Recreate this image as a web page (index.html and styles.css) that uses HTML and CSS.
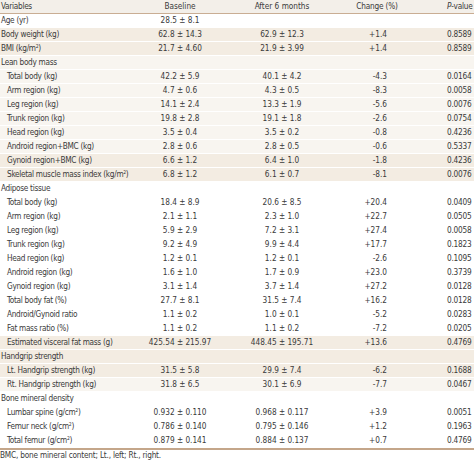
FILE: index.html
```html
<!DOCTYPE html>
<html>
<head>
<meta charset="utf-8">
<link rel="stylesheet" href="styles.css">
</head>
<body>
<div class="table">
  <div class="row head">
    <div class="lab top">Variables</div>
    <div class="v1">Baseline</div>
    <div class="v2">After 6 months</div>
    <div class="chh">Change (%)</div>
    <div class="p"><i>P</i>-value</div>
  </div>
  <div class="row"><div class="lab top">Age (yr)</div><div class="v1">28.5 ± 8.1</div><div class="v2"></div><div class="ch"></div><div class="p"></div></div>
  <div class="row sh"><div class="lab">Body weight (kg)</div><div class="v1">62.8 ± 14.3</div><div class="v2">62.9 ± 12.3</div><div class="ch">+1.4</div><div class="p">0.8589</div></div>
  <div class="row sh"><div class="lab top">BMI (kg/m<sup>2</sup>)</div><div class="v1">21.7 ± 4.60</div><div class="v2">21.9 ± 3.99</div><div class="ch">+1.4</div><div class="p">0.8589</div></div>

  <div class="row lt"><div class="lab top">Lean body mass</div><div class="v1"></div><div class="v2"></div><div class="ch"></div><div class="p"></div></div>
  <div class="row lt"><div class="lab sub">Total body (kg)</div><div class="v1">42.2 ± 5.9</div><div class="v2">40.1 ± 4.2</div><div class="ch">-4.3</div><div class="p">0.0164</div></div>
  <div class="row lt"><div class="lab sub">Arm region (kg)</div><div class="v1">4.7 ± 0.6</div><div class="v2">4.3 ± 0.5</div><div class="ch">-8.3</div><div class="p">0.0058</div></div>
  <div class="row lt"><div class="lab sub">Leg region (kg)</div><div class="v1">14.1 ± 2.4</div><div class="v2">13.3 ± 1.9</div><div class="ch">-5.6</div><div class="p">0.0076</div></div>
  <div class="row lt"><div class="lab sub">Trunk region (kg)</div><div class="v1">19.8 ± 2.8</div><div class="v2">19.1 ± 1.8</div><div class="ch">-2.6</div><div class="p">0.0754</div></div>
  <div class="row lt"><div class="lab sub">Head region (kg)</div><div class="v1">3.5 ± 0.4</div><div class="v2">3.5 ± 0.2</div><div class="ch">-0.8</div><div class="p">0.4236</div></div>
  <div class="row lt"><div class="lab sub">Android region+BMC (kg)</div><div class="v1">2.8 ± 0.6</div><div class="v2">2.8 ± 0.5</div><div class="ch">-0.6</div><div class="p">0.5337</div></div>
  <div class="row sh"><div class="lab sub">Gynoid region+BMC (kg)</div><div class="v1">6.6 ± 1.2</div><div class="v2">6.4 ± 1.0</div><div class="ch">-1.8</div><div class="p">0.4236</div></div>
  <div class="row sh"><div class="lab sub">Skeletal muscle mass index (kg/m<sup>2</sup>)</div><div class="v1">6.8 ± 1.2</div><div class="v2">6.1 ± 0.7</div><div class="ch">-8.1</div><div class="p">0.0076</div></div>

  <div class="row"><div class="lab top">Adipose tissue</div><div class="v1"></div><div class="v2"></div><div class="ch"></div><div class="p"></div></div>
  <div class="row"><div class="lab sub">Total body (kg)</div><div class="v1">18.4 ± 8.9</div><div class="v2">20.6 ± 8.5</div><div class="ch">+20.4</div><div class="p">0.0409</div></div>
  <div class="row"><div class="lab sub">Arm region (kg)</div><div class="v1">2.1 ± 1.1</div><div class="v2">2.3 ± 1.0</div><div class="ch">+22.7</div><div class="p">0.0505</div></div>
  <div class="row"><div class="lab sub">Leg region (kg)</div><div class="v1">5.9 ± 2.9</div><div class="v2">7.2 ± 3.1</div><div class="ch">+27.4</div><div class="p">0.0058</div></div>
  <div class="row"><div class="lab sub">Trunk region (kg)</div><div class="v1">9.2 ± 4.9</div><div class="v2">9.9 ± 4.4</div><div class="ch">+17.7</div><div class="p">0.1823</div></div>
  <div class="row"><div class="lab sub">Head region (kg)</div><div class="v1">1.2 ± 0.1</div><div class="v2">1.2 ± 0.1</div><div class="ch">-2.6</div><div class="p">0.1095</div></div>
  <div class="row"><div class="lab sub">Android region (kg)</div><div class="v1">1.6 ± 1.0</div><div class="v2">1.7 ± 0.9</div><div class="ch">+23.0</div><div class="p">0.3739</div></div>
  <div class="row"><div class="lab sub">Gynoid region (kg)</div><div class="v1">3.1 ± 1.4</div><div class="v2">3.7 ± 1.4</div><div class="ch">+27.2</div><div class="p">0.0128</div></div>
  <div class="row"><div class="lab sub">Total body fat (%)</div><div class="v1">27.7 ± 8.1</div><div class="v2">31.5 ± 7.4</div><div class="ch">+16.2</div><div class="p">0.0128</div></div>
  <div class="row"><div class="lab sub">Android/Gynoid ratio</div><div class="v1">1.1 ± 0.2</div><div class="v2">1.0 ± 0.1</div><div class="ch">-5.2</div><div class="p">0.0283</div></div>
  <div class="row"><div class="lab sub">Fat mass ratio (%)</div><div class="v1">1.1 ± 0.2</div><div class="v2">1.1 ± 0.2</div><div class="ch">-7.2</div><div class="p">0.0205</div></div>
  <div class="row sh"><div class="lab sub">Estimated visceral fat mass (g)</div><div class="v1">425.54 ± 215.97</div><div class="v2">448.45 ± 195.71</div><div class="ch">+13.6</div><div class="p">0.4769</div></div>

  <div class="row sh"><div class="lab top">Handgrip strength</div><div class="v1"></div><div class="v2"></div><div class="ch"></div><div class="p"></div></div>
  <div class="row sh"><div class="lab sub">Lt. Handgrip strength (kg)</div><div class="v1">31.5 ± 5.8</div><div class="v2">29.9 ± 7.4</div><div class="ch">-6.2</div><div class="p">0.1688</div></div>
  <div class="row lt"><div class="lab sub">Rt. Handgrip strength (kg)</div><div class="v1">31.8 ± 6.5</div><div class="v2">30.1 ± 6.9</div><div class="ch">-7.7</div><div class="p">0.0467</div></div>

  <div class="row"><div class="lab top">Bone mineral density</div><div class="v1"></div><div class="v2"></div><div class="ch"></div><div class="p"></div></div>
  <div class="row"><div class="lab sub">Lumbar spine (g/cm<sup>2</sup>)</div><div class="v1">0.932 ± 0.110</div><div class="v2">0.968 ± 0.117</div><div class="ch">+3.9</div><div class="p">0.0051</div></div>
  <div class="row"><div class="lab sub">Femur neck (g/cm<sup>2</sup>)</div><div class="v1">0.786 ± 0.140</div><div class="v2">0.795 ± 0.146</div><div class="ch">+1.2</div><div class="p">0.1963</div></div>
  <div class="row last"><div class="lab sub">Total femur (g/cm<sup>2</sup>)</div><div class="v1">0.879 ± 0.141</div><div class="v2">0.884 ± 0.137</div><div class="ch">+0.7</div><div class="p">0.4769</div></div>
</div>
<p class="note">BMC, bone mineral content; Lt., left; Rt., right.</p>
</body>
</html>
```
FILE: styles.css
```css
html, body {
  margin: 0;
  padding: 0;
  overflow: hidden;
  background: #ffffff;
}
body {
  width: 474px;
  height: 460px;
  font-family: "Liberation Sans Narrow", "Arial Narrow", "DejaVu Sans Condensed", "Liberation Sans", sans-serif;
  font-size: 8.2px;
  color: #3a3a3a;
}
.table {
  display: flex;
  flex-direction: column;
  border-bottom: 2px solid #c4a68a;
}
.row {
  display: grid;
  grid-template-columns: 140px 80px 124px 66px 64px;
  height: 14px;
  line-height: 13px;
  border-bottom: 1px solid #ffffff;
  box-sizing: border-box;
  white-space: nowrap;
}
.row.last {
  border-bottom: 0;
}
.head {
  background: #f3efe9;
  border-bottom: 1px solid #c9ad93;
}
.sh {
  background: #f3ece2;
}
.lt {
  background: #f8f5f0;
}
.lab {
  letter-spacing: -0.3px;
  padding-left: 1px;
}
.lab.sub {
  padding-left: 7px;
}
.v1, .v2 {
  text-align: center;
}
.ch {
  text-align: right;
  padding-right: 23px;
}
.chh {
  text-align: center;
  letter-spacing: -0.2px;
}
.p {
  padding-left: 37px;
  letter-spacing: -0.2px;
}
sup {
  font-size: 5px;
  line-height: 0;
  vertical-align: 3px;
}
.note {
  margin: 0;
  height: 10px;
  line-height: 11px;
  letter-spacing: -0.2px;
}
```
